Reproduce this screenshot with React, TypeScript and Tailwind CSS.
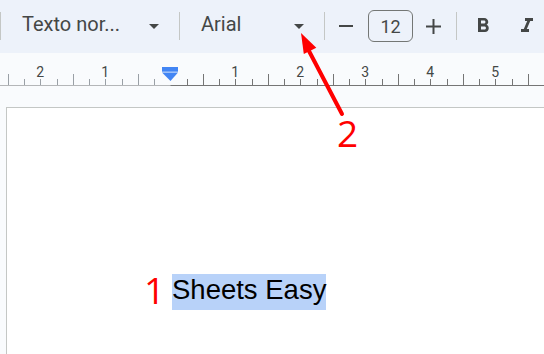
import React from "react";

const ORIGIN = 170.3;
const QUARTER = 16.25;

const ticks = Array.from({ length: 34 }, (_, i) => i - 10).filter((q) => q !== 0);
const numbers = [-2, -1, 1, 2, 3, 4, 5];

function Caret() {
  return (
    <svg width="10" height="5" viewBox="0 0 10 5">
      <path d="M0 0h10L5 5z" fill="#444746" />
    </svg>
  );
}

function Sep({ className = "" }: { className?: string }) {
  return <div className={"h-[28px] w-px bg-[#c4c7c5] " + className} />;
}

function Toolbar() {
  return (
    <div className="flex h-[53px] items-center bg-[#edf2fa] pb-[1px] text-[20px] text-[#444746] [font-family:Roboto,sans-serif]">
      <Sep />
      <div className="ml-[21px] flex w-[137px] items-center justify-between">
        <span className="mb-[4px]">Texto nor...</span>
        <Caret />
      </div>
      <Sep className="ml-[20px]" />
      <div className="ml-[21px] flex w-[103px] items-center justify-between">
        <span className="mb-[4px]">Arial</span>
        <Caret />
      </div>
      <Sep className="ml-[20px]" />
      <svg className="ml-[14px]" width="14" height="2" viewBox="0 0 14 2">
        <rect width="14" height="2" fill="#444746" />
      </svg>
      <div className="ml-[15px] flex h-[32px] w-[45px] items-center justify-center rounded-[6px] border border-[#747775] text-[18px]">
        12
      </div>
      <svg className="ml-[13px]" width="15" height="15" viewBox="0 0 15 15">
        <rect y="6.5" width="15" height="2" fill="#444746" />
        <rect x="6.5" width="2" height="15" fill="#444746" />
      </svg>
      <Sep className="ml-[15px]" />
      <svg className="ml-[14px]" width="24" height="24" viewBox="0 0 24 24">
        <path
          fill="#444746"
          d="M15.6 10.79c.97-.67 1.65-1.770 1.65-2.79 0-2.26-1.75-4-4-4H7v14h7.04c2.09 0 3.71-1.7 3.71-3.79 0-1.52-.86-2.82-2.15-3.42zM10 6.5h3c.83 0 1.5.67 1.5 1.5s-.67 1.5-1.5 1.5h-3v-3zm3.5 9H10v-3h3.5c.83 0 1.5.67 1.5 1.5s-.67 1.5-1.5 1.5z"
        />
      </svg>
      <svg className="ml-[20px]" width="24" height="24" viewBox="0 0 24 24">
        <path fill="#444746" d="M10 4v3h2.21l-3.42 8H6v3h8v-3h-2.21l3.42-8H18V4z" />
      </svg>
    </div>
  );
}

function Ruler() {
  return (
    <div className="relative h-[33px] [font-family:Roboto,sans-serif]">
      <svg width="544" height="33" viewBox="0 0 544 33" className="block">
        <rect x="0" y="32" width={ORIGIN} height="1" fill="#b4b6b8" />
        <rect x={ORIGIN} y="32" width={544 - ORIGIN} height="1" fill="#757575" />
        {ticks.map((q) => {
          const x = Math.round(ORIGIN + q * QUARTER);
          const tall = Math.abs(q % 4) === 2;
          return (
            <rect
              key={q}
              x={x}
              y={tall ? 21 : 26}
              width="1"
              height={tall ? 11 : 6}
              fill={q < 0 ? "#9aa0a6" : "#757575"}
            />
          );
        })}
        <rect x="162" y="14" width="16" height="4.7" fill="#4285f4" />
        <path d="M162 19.5h16l-7.5 8.5z" fill="#4285f4" />
      </svg>
      {numbers.map((n) => (
        <span
          key={n}
          className="absolute top-[12px] -translate-x-1/2 text-[14px] leading-none text-[#444746]"
          style={{ left: ORIGIN + n * 65 }}
        >
          {Math.abs(n)}
        </span>
      ))}
    </div>
  );
}

export default function App() {
  return (
    <div className="relative flex h-[354px] w-[544px] flex-col overflow-hidden bg-[#f9fbfd]">
      <Toolbar />
      <Ruler />
      <div className="ml-[6px] mt-[21px] flex-1 border-l border-t border-[#c4c7c5] bg-white pl-[165px] pt-[166px]">
        <span className="inline-block h-[36px] bg-[#b8d2f9] text-[27.5px] leading-[31px] text-black [font-family:'Liberation_Sans',Arial,sans-serif]">
          Sheets Easy
        </span>
      </div>

      {/* annotations */}
      <svg
        className="pointer-events-none absolute left-0 top-0"
        width="544"
        height="354"
        viewBox="0 0 544 354"
      >
        <line x1="342" y1="114" x2="309" y2="51" stroke="#ff0000" strokeWidth="4" strokeLinecap="round" />
        <path d="M301 33L316.3 47.7L303.8 54z" fill="#ff0000" />
      </svg>
      <span className="absolute left-[337px] top-[114px] text-[37px] leading-none text-[#ff0000] [font-family:'Open_Sans',sans-serif]">
        2
      </span>
      <span className="absolute left-[144px] top-[271px] text-[37px] leading-none text-[#ff0000] [font-family:'Open_Sans',sans-serif]">
        1
      </span>
    </div>
  );
}
